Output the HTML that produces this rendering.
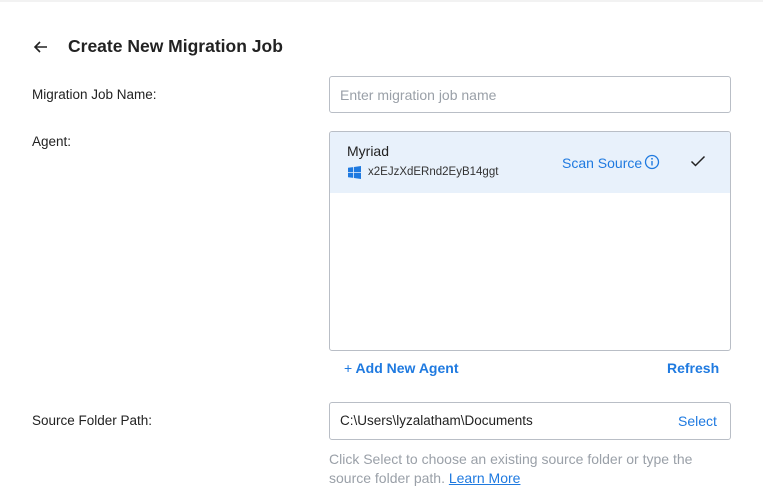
<!DOCTYPE html>
<html><head><style>
body{margin:0;width:763px;height:501px;background:#fff;font-family:"Liberation Sans",sans-serif;color:#222;position:relative;overflow:hidden}
.a{position:absolute;white-space:nowrap}
.lbl{font-size:13.5px;color:#222}
.box{position:absolute;border:1px solid #b9bec6;border-radius:3px;box-sizing:border-box;background:#fff}
.blue{color:#1f7ae0}
</style></head><body>
<div class="a" style="left:0;top:0;width:763px;height:2px;background:#f2f2f2"></div>
<svg class="a" style="left:33px;top:40px" width="16" height="14" viewBox="0 0 16 14"><path d="M14 7H2M7 2L2 7l5 5" fill="none" stroke="#222" stroke-width="1.6"/></svg>
<div class="a" style="left:68px;top:36px;font-size:17.5px;font-weight:bold;color:#222">Create New Migration Job</div>
<div class="a lbl" style="left:32px;top:87px">Migration Job Name:</div>
<div class="box" style="left:329px;top:76px;width:402px;height:37px"></div>
<div class="a" style="left:340px;top:87px;font-size:14px;color:#9aa0a8">Enter migration job name</div>
<div class="a lbl" style="left:32px;top:134px">Agent:</div>
<div class="box" style="left:329px;top:131px;width:402px;height:220px;overflow:hidden">
<div style="position:absolute;left:0;top:0;width:100%;height:61px;background:#e8f1fb"></div>
</div>
<div class="a" style="left:347px;top:143px;font-size:14px;color:#222">Myriad</div>
<svg class="a" style="left:348px;top:166px" width="13" height="13" viewBox="0 0 13 13"><path d="M0 1.8l5.2-.7v5H0zM6 1l7-1v6.1H6zM0 6.9h5.2v5L0 11.2zM6 6.9h7V13l-7-1z" fill="#1f7ae0"/></svg>
<div class="a" style="left:368px;top:166px;font-size:11.5px;color:#333">x2EJzXdERnd2EyB14ggt</div>
<div class="a blue" style="left:562px;top:155px;font-size:14px">Scan Source</div>
<svg class="a" style="left:644px;top:154px" width="16" height="16" viewBox="0 0 16 16"><circle cx="8" cy="8" r="6.5" fill="none" stroke="#1f7ae0" stroke-width="1.3"/><path d="M8 7v4.5" stroke="#1f7ae0" stroke-width="1.4"/><circle cx="8" cy="4.8" r=".9" fill="#1f7ae0"/></svg>
<svg class="a" style="left:690px;top:155px" width="16" height="12" viewBox="0 0 16 12"><path d="M1.5 6.5l4 4 9-9" fill="none" stroke="#222" stroke-width="1.5"/></svg>
<div class="a blue" style="left:344px;top:360px;font-size:14px;font-weight:bold"><span style="font-weight:normal">+</span> Add New Agent</div>
<div class="a blue" style="left:667px;top:360px;font-size:14px;font-weight:bold">Refresh</div>
<div class="a lbl" style="left:32px;top:413px">Source Folder Path:</div>
<div class="box" style="left:329px;top:402px;width:402px;height:38px"></div>
<div class="a" style="left:340px;top:413px;font-size:13.5px;color:#222">C:\Users\lyzalatham\Documents</div>
<div class="a blue" style="left:678px;top:413px;font-size:14px">Select</div>
<div class="a" style="left:329px;top:450px;font-size:14px;color:#9aa0a8;line-height:19px">Click Select to choose an existing source folder or type the<br>source folder path. <span class="blue" style="text-decoration:underline">Learn More</span></div>
</body></html>
